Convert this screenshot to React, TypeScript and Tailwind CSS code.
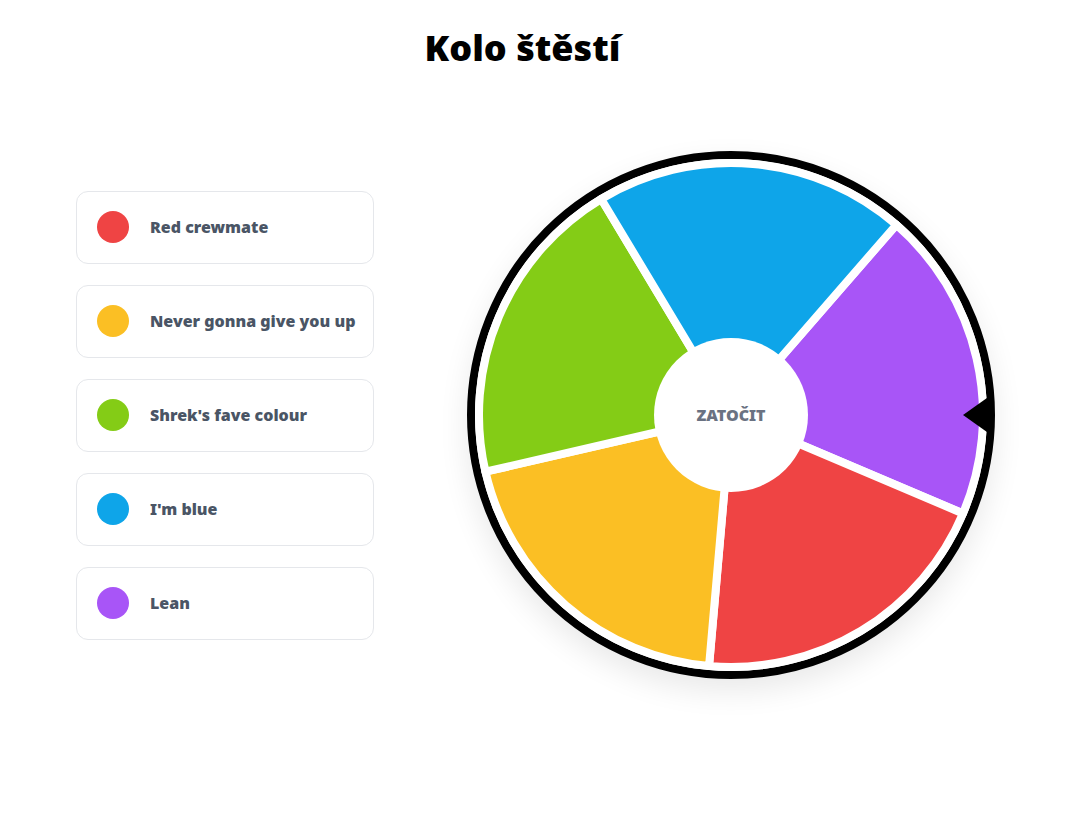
import React from 'react';

const items = [
  { label: 'Red crewmate', color: '#ef4444' },
  { label: 'Never gonna give you up', color: '#fbbf24' },
  { label: "Shrek's fave colour", color: '#84cc16' },
  { label: "I'm blue", color: '#0ea5e9' },
  { label: 'Lean', color: '#a855f7' },
];

// screen angles (deg, clockwise from +x) where each slice starts
const slices = [
  { color: '#a855f7', from: -49 },
  { color: '#ef4444', from: 23 },
  { color: '#fbbf24', from: 95 },
  { color: '#84cc16', from: 167 },
  { color: '#0ea5e9', from: 239 },
];

function pt(deg: number, r: number) {
  const a = (deg * Math.PI) / 180;
  return `${(256 + r * Math.cos(a)).toFixed(2)},${(256 + r * Math.sin(a)).toFixed(2)}`;
}

function slicePath(from: number, r: number) {
  return `M256,256 L${pt(from, r)} A${r},${r} 0 0 1 ${pt(from + 72, r)} Z`;
}

function Wheel() {
  return (
    <div className="relative h-[528px] w-[528px] shrink-0 rounded-full border-8 border-black bg-white shadow-[0_12px_30px_rgba(0,0,0,0.09)]">
      <svg className="block h-full w-full" viewBox="0 0 512 512">
        {slices.map((s) => (
          <path key={s.color} d={slicePath(s.from, 252)} fill={s.color} stroke="#fff" strokeWidth={8} strokeLinejoin="round" />
        ))}
      </svg>
      <button className="absolute left-1/2 top-1/2 flex h-[154px] w-[154px] -translate-x-1/2 -translate-y-1/2 items-center justify-center rounded-full bg-white text-base font-black text-gray-500">
        ZATOČIT
      </button>
      <div className="absolute right-[-7px] top-1/2 h-0 w-0 -translate-y-1/2 border-y-[22px] border-r-[31px] border-y-transparent border-r-black" />
    </div>
  );
}

export default function App() {
  return (
    <div className="min-h-screen bg-white font-['Noto_Sans',sans-serif]">
      <h1 className="pr-[26px] pt-[28px] text-center text-4xl font-black text-black">Kolo štěstí</h1>
      <div className="mt-[83px] flex items-center justify-center gap-[93px]">
        <ul className="flex w-[298px] shrink-0 flex-col gap-[21px]">
          {items.map((it) => (
            <li key={it.label} className="flex h-[73px] items-center gap-[21px] rounded-xl border border-gray-200 bg-white px-5">
              <span className="h-8 w-8 shrink-0 rounded-full" style={{ backgroundColor: it.color }} />
              <span className="whitespace-nowrap text-base font-black text-gray-600">{it.label}</span>
            </li>
          ))}
        </ul>
        <Wheel />
      </div>
    </div>
  );
}
